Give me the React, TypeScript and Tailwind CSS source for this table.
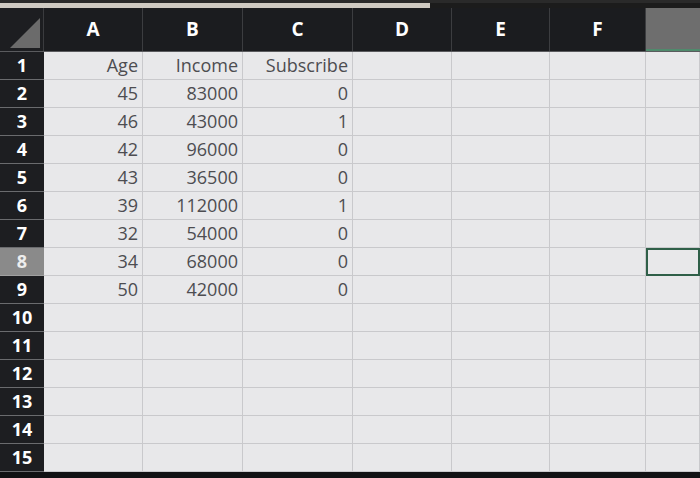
import React from "react";

const cols = ["A", "B", "C", "D", "E", "F", ""];

const data: string[][] = [
  ["Age", "Income", "Subscribe"],
  ["45", "83000", "0"],
  ["46", "43000", "1"],
  ["42", "96000", "0"],
  ["43", "36500", "0"],
  ["39", "112000", "1"],
  ["32", "54000", "0"],
  ["34", "68000", "0"],
  ["50", "42000", "0"],
];

const gridCols = "grid grid-cols-[44px_99px_100px_110px_99px_98px_96px_1fr]";

function Corner() {
  return (
    <div className="h-full bg-[#1d1e21] border-r border-[#3a3b3e] flex items-end justify-end p-[3px]">
      <svg width="30" height="30" viewBox="0 0 30 30">
        <polygon points="30,0 30,30 0,30" fill="#6b6b6b" />
      </svg>
    </div>
  );
}

export default function App() {
  const rows = Array.from({ length: 15 }, (_, i) => i + 1);

  return (
    <div
      className="w-[700px] h-[478px] overflow-hidden bg-[#111214] flex flex-col"
      style={{ fontFamily: '"Open Sans", "Liberation Sans", sans-serif' }}
    >
      {/* top edge of the window */}
      <div className="h-[3px] bg-[#2a2a2a]" />
      <div className="h-[5px] flex">
        <div className="w-[430px] bg-[#cfcac2]" />
        <div className="flex-1 bg-[#1c1c1c]" />
      </div>

      {/* column header */}
      <div className={`${gridCols} h-[44px] border-b border-[#5a5b5e]`}>
        <Corner />
        {cols.map((c, i) =>
          c ? (
            <div
              key={i}
              className="bg-[#1b1c1f] border-r border-[#3c3d40] flex items-center justify-center text-white font-bold text-[19px]"
            >
              {c}
            </div>
          ) : (
            <div key={i} className="bg-[#6e6e6e] border-b-2 border-[#4f8a6c]" />
          )
        )}
      </div>

      {/* rows */}
      <div className="flex-1 flex flex-col">
        {rows.map((r) => {
          const vals = data[r - 1] || [];
          const selected = r === 8;
          return (
            <div key={r} className={`${gridCols} h-[28px]`}>
              <div
                className={
                  selected
                    ? "bg-[#8a8a8a] text-[#ededed] border-b border-[#a0a0a0] flex items-center justify-center font-bold text-[18px]"
                    : "bg-[#1d1e21] text-white border-b border-[#6a6b6e] flex items-center justify-center font-bold text-[18px]"
                }
              >
                {r}
              </div>
              {cols.map((_, ci) => {
                const isSel = selected && ci === 6;
                return (
                  <div
                    key={ci}
                    className={
                      isSel
                        ? "bg-[#e8e8ea] border-2 border-[#2f5f48] flex items-center justify-end pr-1"
                        : "bg-[#e8e8ea] border-r border-b border-[#c9c9cc] flex items-center justify-end pr-1 text-[18px] text-[#4d4d51]"
                    }
                  >
                    {vals[ci] ?? ""}
                  </div>
                );
              })}
            </div>
          );
        })}
      </div>
    </div>
  );
}
